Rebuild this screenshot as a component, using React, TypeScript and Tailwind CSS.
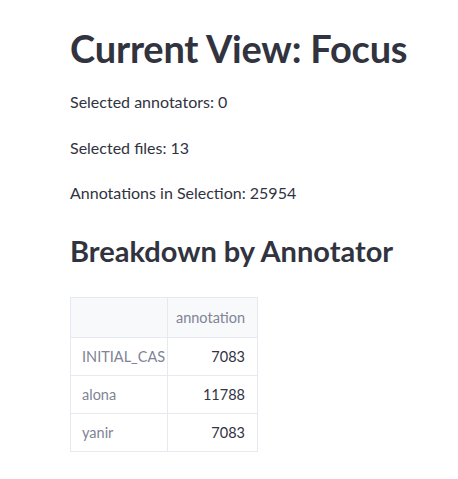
import React from 'react';

const rows = [
  { name: 'INITIAL_CAS', value: 7083 },
  { name: 'alona', value: 11788 },
  { name: 'yanir', value: 7083 },
];

export default function App() {
  return (
    <div className="min-h-screen bg-white text-[#31333f] font-['Lato','Liberation_Sans',sans-serif]">
      <main className="pl-[70px] pt-[22px]">
        {/* Title */}
        <h1 className="text-[38px] font-bold leading-[52px] tracking-[-0.2px]">Current View: Focus</h1>

        <div className="mt-[15px] flex flex-col gap-[19.5px] text-[16px] leading-[26px]">
          <p>Selected annotators: 0</p>
          <p>Selected files: 13</p>
          <p>Annotations in Selection: 25954</p>
        </div>

        <h2 className="mt-[25px] text-[29px] font-bold leading-[40px]">Breakdown by Annotator</h2>

        {/* Table */}
        <table className="mt-[26px] table-fixed border-collapse text-[14.5px]">
          <thead>
            <tr className="h-[40px] bg-[#f8f9fb]">
              <th className="w-[97px] border border-[#e6e9ef]"></th>
              <th className="w-[90px] border border-[#e6e9ef] pr-[12px] text-right font-normal text-[#808495]">
                annotation
              </th>
            </tr>
          </thead>
          <tbody>
            {rows.map((r) => (
              <tr key={r.name} className="h-[38px]">
                <td className="overflow-hidden whitespace-nowrap text-clip border border-[#e6e9ef] pl-[11px] text-[#808495]">
                  {r.name}
                </td>
                <td className="border border-[#e6e9ef] pr-[12px] text-right">{r.value}</td>
              </tr>
            ))}
          </tbody>
        </table>
      </main>
    </div>
  );
}
